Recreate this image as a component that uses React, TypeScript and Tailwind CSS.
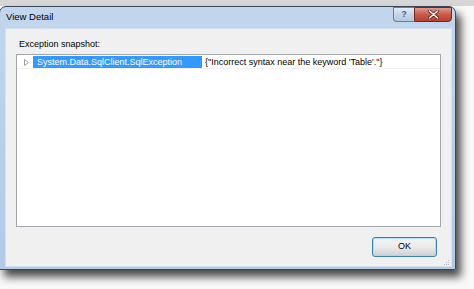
export default function App() {
  return (
    <div className="w-[474px] h-[289px] overflow-hidden bg-[#f9f9f9] flex flex-col" style={{ fontFamily: '"Liberation Sans", Arial, sans-serif' }}>
      <div className="h-[6px] shrink-0 bg-[#d6d6d6]" />
      {/* dialog window */}
      <div className="-ml-[1px] w-[457px] h-[264px] shrink-0 flex flex-col border border-[#3a4859] rounded-t-[7px] bg-gradient-to-b from-[#c2d7ee] via-[#b7cfe9] to-[#b2cae6] px-[5px] pr-[3px] pb-[2px] shadow-[5px_7px_9px_rgba(0,0,0,0.7)]">
        {/* title bar */}
        <div className="h-[21px] shrink-0 flex items-start justify-between pl-[1px]">
          <span className="text-[9.5px] leading-[12px] text-black mt-[4px]">View Detail</span>
          <div className="flex h-[15px]">
            <div className="w-[21px] h-full flex items-center justify-center border border-[#6d7e93] border-r-0 rounded-bl-[4px] bg-gradient-to-b from-[#e3ebf4] via-[#c6d5e6] to-[#b4c8de] text-[9px] font-bold text-[#4c5f77]">
              ?
            </div>
            <div className="w-[38px] h-full flex items-center justify-center border border-[#6b2b23] rounded-br-[4px] bg-gradient-to-b from-[#dd9a8e] via-[#c75a4b] to-[#b9402f]">
              <svg width="11" height="9" viewBox="0 0 11 9">
                <path d="M1.5 1 L9.5 8 M9.5 1 L1.5 8" stroke="#5a1a12" strokeWidth="3" strokeLinecap="round" />
                <path d="M1.5 1 L9.5 8 M9.5 1 L1.5 8" stroke="#ffffff" strokeWidth="1.6" strokeLinecap="round" />
              </svg>
            </div>
          </div>
        </div>

        {/* content */}
        <div className="flex-1 flex flex-col bg-[#f0f0f0] border border-[#d5e1ee] px-[10px] pt-[9px]">
          <div className="h-[12px] leading-[12px] pl-[3px] text-[9px] text-black">Exception snapshot:</div>
          <div className="mt-[4px] h-[173px] bg-white border border-[#a3a7ad] pt-[1px]">
            <div className="h-[13px] flex items-center border-b border-[#f1f1f1]">
              <div className="w-[16px] pl-[7px] flex items-center">
                <svg width="5" height="7" viewBox="0 0 5 7">
                  <path d="M0.5 0.5 L4.5 3.5 L0.5 6.5 Z" fill="none" stroke="#9a9a9a" strokeWidth="1" />
                </svg>
              </div>
              <div className="w-[169px] h-full bg-[#3399ff] pl-[4px] text-[9px] leading-[13px] text-white">
                System.Data.SqlClient.SqlException
              </div>
              <div className="pl-[3px] text-[9px] leading-[13px] text-black whitespace-nowrap">
                {'{"Incorrect syntax near the keyword \'Table\'."}'}
              </div>
            </div>
          </div>
          <div className="mt-[10px] flex justify-end items-end pr-[4px]">
            <button className="w-[65px] h-[20px] rounded-[3px] border border-[#3c7fb1] bg-gradient-to-b from-[#f2f2f2] via-[#ebebeb] to-[#cfcfcf] text-[9px] text-black shadow-[inset_0_0_0_1px_rgba(160,220,250,0.8)]">
              OK
            </button>
          </div>
          <div className="flex justify-end -mr-[9px] mt-[2px]">
            <svg width="7" height="7" viewBox="0 0 7 7">
              <rect x="5" y="1" width="1" height="1" fill="#b8b8b8" />
              <rect x="3" y="3" width="1" height="1" fill="#b8b8b8" />
              <rect x="5" y="3" width="1" height="1" fill="#b8b8b8" />
              <rect x="1" y="5" width="1" height="1" fill="#b8b8b8" />
              <rect x="3" y="5" width="1" height="1" fill="#b8b8b8" />
              <rect x="5" y="5" width="1" height="1" fill="#b8b8b8" />
            </svg>
          </div>
        </div>
      </div>
    </div>
  );
}
